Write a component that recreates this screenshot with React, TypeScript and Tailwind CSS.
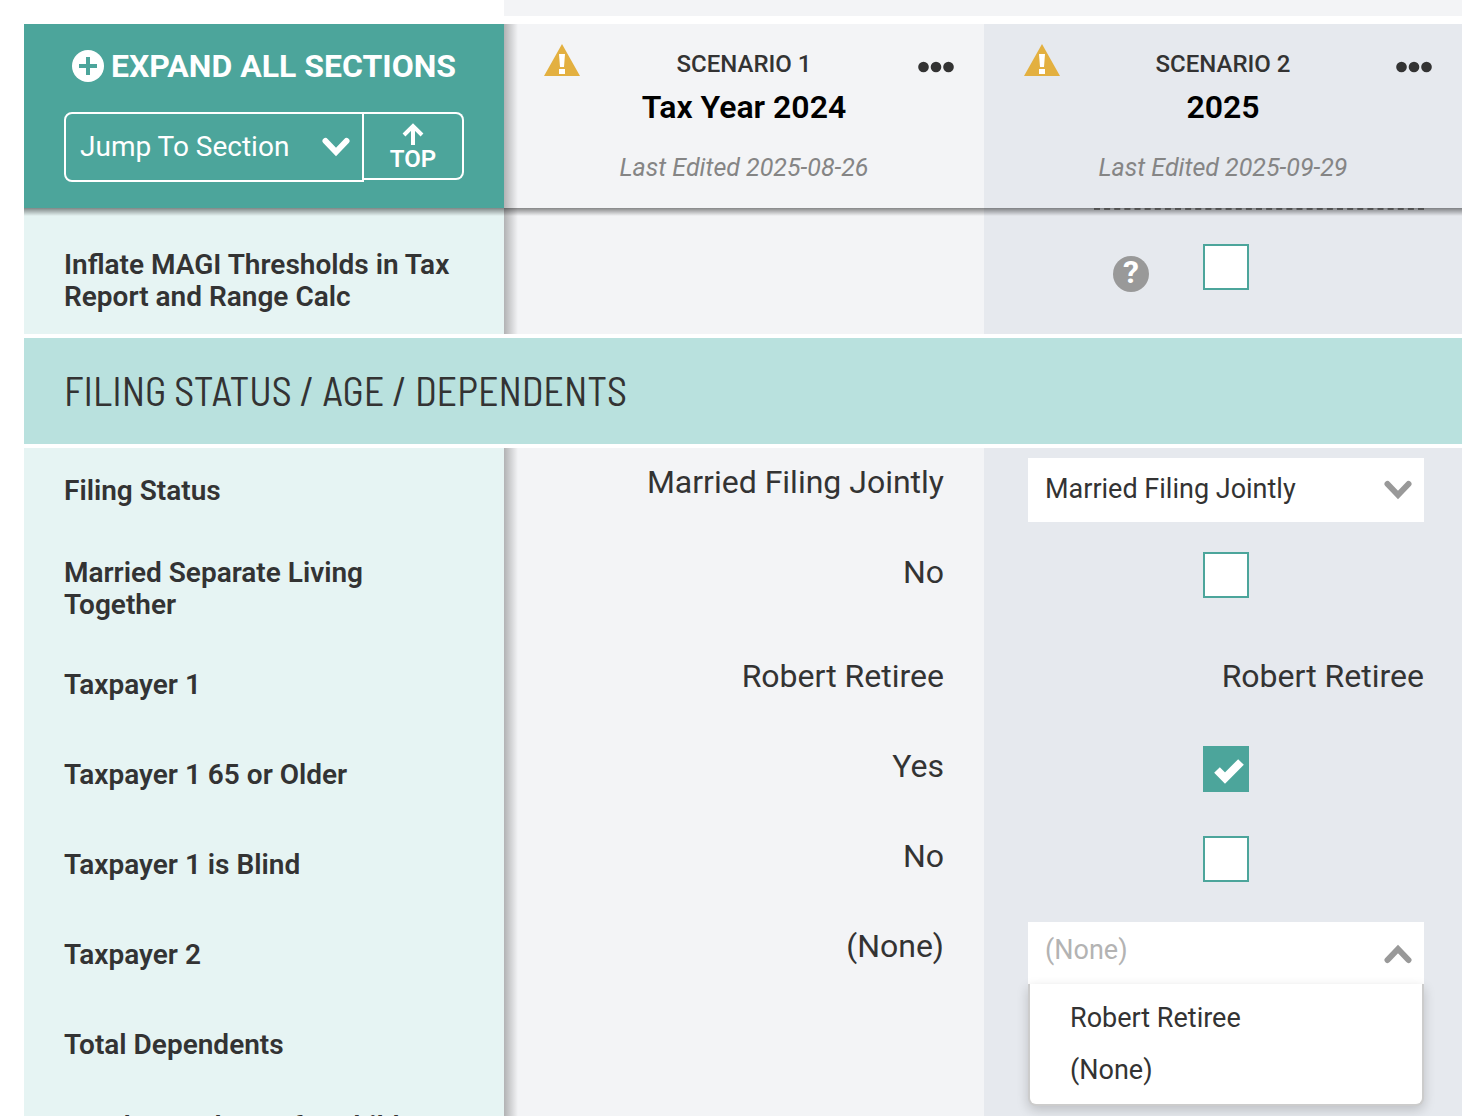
import { useState } from "react";

type Cell =
  | { kind: "check"; checked?: boolean }
  | { kind: "text"; value: string }
  | { kind: "select"; options: string[] }
  | { kind: "combo"; placeholder: string; options: string[] };

interface RowData {
  label: string;
  first?: string;
  second?: Cell;
  tall?: boolean;
}

const rows: RowData[] = [
  {
    label: "Filing Status",
    first: "Married Filing Jointly",
    second: {
      kind: "select",
      options: ["Married Filing Jointly", "Married Filing Separately", "Single", "Head of Household"],
    },
  },
  { label: "Married Separate Living Together", first: "No", second: { kind: "check" }, tall: true },
  { label: "Taxpayer 1", first: "Robert Retiree", second: { kind: "text", value: "Robert Retiree" } },
  { label: "Taxpayer 1 65 or Older", first: "Yes", second: { kind: "check", checked: true } },
  { label: "Taxpayer 1 is Blind", first: "No", second: { kind: "check" } },
  {
    label: "Taxpayer 2",
    first: "(None)",
    second: { kind: "combo", placeholder: "(None)", options: ["Robert Retiree", "(None)"] },
  },
  { label: "Total Dependents" },
  { label: "Number Under 17 for Child Tax Credit", tall: true },
];

const COL_ONE =
  "bg-[#f3f4f6] bg-[linear-gradient(to_right,rgba(0,0,0,0.27),transparent_14px)] align-top font-normal";
const COL_TWO = "bg-[#e6e9ee] align-top font-normal";
const VALUE = "pt-[14px] text-right text-[32px] leading-10 text-[#333]";

const HEADER_SHADOW =
  "after:absolute after:inset-x-0 after:top-0 after:h-2 after:bg-linear-to-b after:from-black/45 after:to-transparent";

function Chevron({ up, className }: { up?: boolean; className: string }) {
  return (
    <svg viewBox="0 0 28 20" className={`pointer-events-none h-5 w-7 ${className}`} aria-hidden="true">
      <path
        d={up ? "M3.5 16 L14 5 L24.5 16" : "M3.5 4 L14 15 L24.5 4"}
        fill="none"
        stroke="currentColor"
        strokeWidth="6"
        strokeLinecap="round"
      />
    </svg>
  );
}

function Checkbox({ label, defaultChecked }: { label: string; defaultChecked?: boolean }) {
  const [on, setOn] = useState(!!defaultChecked);
  return (
    <span className="col-start-2 grid">
      <input
        type="checkbox"
        aria-label={label}
        checked={on}
        onChange={(e) => setOn(e.target.checked)}
        className="col-start-1 row-start-1 size-[46px] appearance-none border-2 border-[#4ca59b] bg-white checked:bg-[#4ca59b]"
      />
      {on && (
        <svg
          viewBox="0 0 46 46"
          className="pointer-events-none col-start-1 row-start-1 size-[46px]"
          aria-hidden="true"
        >
          <path d="M14 24 L22 32 L38 16" fill="none" stroke="#fff" strokeWidth="8" />
        </svg>
      )}
    </span>
  );
}

function SelectBox({ label, options }: { label: string; options: string[] }) {
  return (
    <div className="grid items-center">
      <select
        aria-label={label}
        className="col-start-1 row-start-1 h-16 w-full appearance-none bg-white pr-12 pb-[2px] pl-[17px] text-[27px] text-[#333]"
      >
        {options.map((o) => (
          <option key={o}>{o}</option>
        ))}
      </select>
      <Chevron className="col-start-1 row-start-1 mr-3 justify-self-end text-[#999]" />
    </div>
  );
}

function ComboBox({ label, placeholder, options }: { label: string; placeholder: string; options: string[] }) {
  const [value, setValue] = useState("");
  return (
    <div className="relative grid items-center">
      <input
        type="text"
        role="combobox"
        aria-label={label}
        aria-expanded="true"
        aria-controls="taxpayer-options"
        placeholder={placeholder}
        value={value}
        onChange={(e) => setValue(e.target.value)}
        className="col-start-1 row-start-1 h-16 w-full bg-white pr-12 pb-2 pl-[17px] text-[27px] text-[#333] placeholder:text-[#b3b3b3]"
      />
      <Chevron up className="col-start-1 row-start-1 mr-3 justify-self-end text-[#999]" />
      <ul
        id="taxpayer-options"
        role="listbox"
        className="absolute inset-x-0 top-[62px] z-10 rounded-b-lg border-x-2 border-b-2 border-[#ccc] bg-white pt-2 pb-2 text-[27px] leading-[52px] text-[#333] shadow-[0_4px_12px_rgba(0,0,0,0.18)]"
      >
        {options.map((o) => (
          <li key={o} role="option" aria-selected={o === value} className="pl-10" onClick={() => setValue(o)}>
            {o}
          </li>
        ))}
      </ul>
    </div>
  );
}

function ScenarioHeader({ title, name, edited }: { title: string; name: string; edited: string }) {
  return (
    <div className="grid grid-cols-[36px_1fr_46px] items-start pt-5 pr-[30px] pl-10">
      <svg viewBox="0 0 36 32" className="h-8 w-9" role="img" aria-label="Warning">
        <path d="M18 0 L36 32 H0 Z" fill="#e3b040" />
        <path d="M15 10 H21 L20 23 H16 Z M15 25 H21 V30 H15 Z" fill="#fff" />
      </svg>
      <div className="flex flex-col items-center whitespace-nowrap">
        <div className="text-[24px] leading-10 font-medium text-[#333]">{title}</div>
        <div className="text-[32px] leading-[46px] font-semibold text-black">{name}</div>
        <div className="pt-[18px] text-[25px] leading-10 text-[#858585] italic">{edited}</div>
      </div>
      <button className="flex h-[46px] items-center justify-end" aria-label={`${title} options`}>
        <svg viewBox="0 0 36 12" className="h-3 w-9" aria-hidden="true" fill="#333">
          <circle cx="5.5" cy="6" r="5.3" />
          <circle cx="18" cy="6" r="5.3" />
          <circle cx="30.5" cy="6" r="5.3" />
        </svg>
      </button>
    </div>
  );
}

function SectionControls() {
  return (
    <div className="px-10 pt-[22px] text-white">
      <button className="flex w-full items-center justify-center gap-[7px] text-[32px] leading-10 font-bold whitespace-nowrap">
        <svg viewBox="0 0 32 32" className="size-8" aria-hidden="true">
          <circle cx="16" cy="16" r="16" fill="#fff" />
          <path d="M16 7 V25 M7 16 H25" stroke="#4ca59b" strokeWidth="4" />
        </svg>
        EXPAND ALL SECTIONS
      </button>
      <div className="mt-[26px] flex items-start">
        <div className="grid flex-1 items-center">
          <select
            aria-label="Jump To Section"
            className="col-start-1 row-start-1 h-[70px] w-full appearance-none rounded-l-lg border-2 border-white bg-transparent pr-12 pl-[14px] text-[28px]"
          >
            <option>Jump To Section</option>
          </select>
          <Chevron className="col-start-1 row-start-1 mr-[14px] justify-self-end" />
        </div>
        <button className="flex h-[68px] w-[100px] flex-col items-center rounded-r-lg border-y-2 border-r-2 border-white pt-2 text-[24px] leading-[26px] font-semibold">
          <svg viewBox="0 0 24 24" className="size-6" aria-hidden="true">
            <path d="M12 23 V4 M3 13 L12 4 L21 13" fill="none" stroke="#fff" strokeWidth="4" />
          </svg>
          TOP
        </button>
      </div>
    </div>
  );
}

function SecondCell({ label, cell }: { label: string; cell?: Cell }) {
  if (!cell) return null;
  if (cell.kind === "text") return <div className={VALUE}>{cell.value}</div>;
  if (cell.kind === "check") {
    return (
      <div className="grid grid-cols-[1fr_auto_1fr] items-start pt-[14px]">
        <Checkbox label={label} defaultChecked={cell.checked} />
      </div>
    );
  }
  return (
    <div className="pt-[10px]">
      {cell.kind === "select" ? (
        <SelectBox label={label} options={cell.options} />
      ) : (
        <ComboBox label={label} placeholder={cell.placeholder} options={cell.options} />
      )}
    </div>
  );
}

function LabelCell({ label, className }: { label: string; className: string }) {
  return (
    <th
      scope="row"
      className={`bg-[#e6f4f3] px-10 text-left align-top text-[28px] leading-8 font-semibold text-[#333] ${className}`}
    >
      {label}
    </th>
  );
}

export default function App() {
  return (
    <main className="h-screen overflow-hidden bg-white pl-6 font-['Roboto',sans-serif]">
      <div className="mb-2 ml-[480px] h-4 bg-[#f3f4f6]" />
      <table className="w-full table-fixed border-separate border-spacing-0">
        <colgroup>
          <col className="w-[480px]" />
          <col className="w-[480px]" />
          <col />
        </colgroup>
        <thead>
          <tr className="h-[184px]">
            <td className="bg-[#4ca59b] align-top">
              <SectionControls />
            </td>
            <th scope="col" className={COL_ONE}>
              <ScenarioHeader title="SCENARIO 1" name="Tax Year 2024" edited="Last Edited 2025-08-26" />
            </th>
            <th scope="col" className={COL_TWO}>
              <ScenarioHeader title="SCENARIO 2" name="2025" edited="Last Edited 2025-09-29" />
            </th>
          </tr>
        </thead>
        <tbody>
          <tr className="relative h-[126px]">
            <LabelCell
              label="Inflate MAGI Thresholds in Tax Report and Range Calc"
              className={`pt-[41px] ${HEADER_SHADOW}`}
            />
            <td className={COL_ONE} />
            <td className={`${COL_TWO} pr-[38px] pl-11`}>
              <div className="ml-[66px] border-t-2 border-dashed border-[#888]" />
              <div className="grid grid-cols-[1fr_auto_1fr] items-start pt-[34px]">
                <button
                  className="mt-3 mr-[54px] flex size-9 items-center justify-center justify-self-end rounded-full bg-[#999] pb-1 text-[32px] leading-8 font-bold text-white"
                  aria-label="Help"
                >
                  ?
                </button>
                <Checkbox label="Inflate MAGI Thresholds in Tax Report and Range Calc" />
              </div>
            </td>
          </tr>
          <tr>
            <th
              colSpan={3}
              scope="colgroup"
              className="h-[114px] border-y-4 border-white bg-[#b9e1de] px-10 pb-[2px] text-left font-['Barlow_Semi_Condensed','Roboto_Condensed',sans-serif] text-[40px] leading-[48px] font-normal text-[#333]"
            >
              FILING STATUS / AGE / DEPENDENTS
            </th>
          </tr>
          {rows.map((r) => (
            <tr key={r.label} className={r.tall ? "h-[104px]" : "h-[90px]"}>
              <LabelCell label={r.label} className={r.tall ? "pt-[19px]" : "pt-[27px]"} />
              <td className={`${COL_ONE} pr-10`}>
                <div className={VALUE}>{r.first}</div>
              </td>
              <td className={`${COL_TWO} pr-[38px] pl-11`}>
                <SecondCell label={r.label} cell={r.second} />
              </td>
            </tr>
          ))}
        </tbody>
      </table>
    </main>
  );
}
